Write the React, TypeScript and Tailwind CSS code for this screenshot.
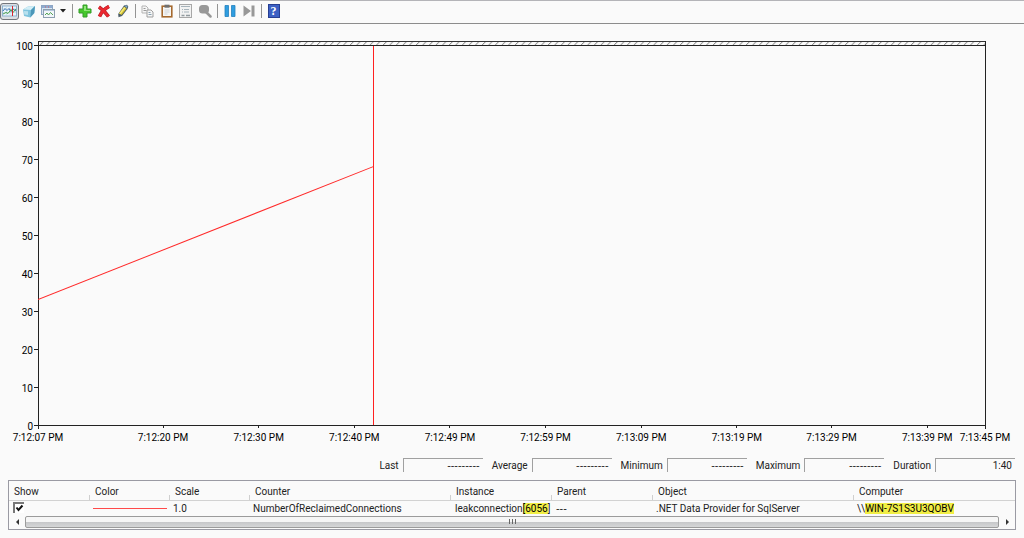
import type { ReactNode } from "react"

const samples = [33, 68]
const ySteps = [100, 90, 80, 70, 60, 50, 40, 30, 20, 10, 0]
const xSteps = [
    { at: 0, time: "7:12:07 PM" },
    { at: 13.2, time: "7:12:20 PM" },
    { at: 23.3, time: "7:12:30 PM" },
    { at: 33.4, time: "7:12:40 PM" },
    { at: 43.5, time: "7:12:49 PM" },
    { at: 53.6, time: "7:12:59 PM" },
    { at: 63.7, time: "7:13:09 PM" },
    { at: 73.8, time: "7:13:19 PM" },
    { at: 83.8, time: "7:13:29 PM" },
    { at: 93.9, time: "7:13:39 PM" },
    { at: 100, time: "7:13:45 PM" },
]
// how far the sweep has come, in percent of the plot width
const now = 35.4

const stats = [
    { name: "Last", value: "---------" },
    { name: "Average", value: "---------" },
    { name: "Minimum", value: "---------" },
    { name: "Maximum", value: "---------" },
    { name: "Duration", value: "1:40" },
]

const columns = [
    { name: "Show", width: "w-[81px]" },
    { name: "Color", width: "w-[80px]" },
    { name: "Scale", width: "w-[80px]" },
    { name: "Counter", width: "w-[201px]" },
    { name: "Instance", width: "w-[101px]" },
    { name: "Parent", width: "w-[101px]" },
    { name: "Object", width: "w-[201px]" },
    { name: "Computer", width: "" },
]

function Tool({ label, pressed, narrow, children }: { label: string, pressed?: boolean, narrow?: boolean, children: ReactNode }) {
    return (
        <button
            type="button"
            aria-label={label}
            className={`flex h-[17px] shrink-0 items-center justify-center ${narrow ? "w-3" : "w-[19px]"} ${pressed ? "rounded-[3px] border border-[#73767c] bg-[#dcdfe4]" : ""}`}
        >
            {children}
        </button>
    )
}

function Separator() {
    return (
        <div className="flex w-1.5 shrink-0 justify-center">
            <div className="h-[14px] w-px bg-[#949494]" />
        </div>
    )
}

function Toolbar() {
    return (
        <div className="flex h-6 items-center border-y border-t-[#b4b4b8] border-b-[#8c8c8c] pb-0.5">
            <Tool label="View current activity" pressed>
                <svg width="15" height="12" viewBox="0 0 15 12" fill="none">
                    <rect x=".5" y="1" width="14" height="10" fill="#eaf4fb" stroke="#8fb3cf" />
                    <path d="M1 4h13M1 7.500h13M4.500 1v10M8 1v10" stroke="#bcd5e6" strokeWidth=".6" />
                    <path d="M1 6l2-2.500 2 2 2-2 2 3 2-2.500 3 2" stroke="#3c74b8" />
                    <path d="M1 9l3-1.500 2 1 3-4 2 3 3-3.500" stroke="#4aa14a" />
                    <path d="M10.500 1v10" stroke="#d8262c" />
                </svg>
            </Tool>
            <Tool label="View log data">
                <svg width="14" height="13" viewBox="0 0 14 13">
                    <path d="M1 4.500l5-3 7-.5-.7 7-4 4.500L2 11z" fill="#7fc4de" />
                    <path d="M1 4.500l5-3 7-.5-4 4z" fill="#d3eef6" />
                    <path d="M9 5l4-4-.7 7-4 4.500z" fill="#4c97b9" />
                    <path d="M2 6l4 .3V10l-3.700-.5z" fill="#b8e1ef" />
                </svg>
            </Tool>
            <Tool label="Change graph type">
                <svg width="14" height="13" viewBox="0 0 14 13" fill="none">
                    <rect x=".5" y=".5" width="11" height="9" fill="#d9e6f3" stroke="#8ea6c4" />
                    <path d="M1 2h10" stroke="#8fabd0" strokeWidth="2" />
                    <path d="M4 2h1M7 2h1" stroke="#d2636b" />
                    <rect x="2.500" y="4.500" width="11" height="8" fill="#f2f6fa" stroke="#8d9fb0" />
                    <path d="M3 5.500h10" stroke="#b5c8dc" />
                    <path d="M4 10l2-2 1.500 2 2-2.500 2.500 2.500" stroke="#53a355" />
                </svg>
            </Tool>
            <Tool label="Graph type menu" narrow>
                <svg width="6" height="4" viewBox="0 0 6 4"><path d="M0 0h6L3 3.500z" fill="#222" /></svg>
            </Tool>
            <Separator />
            <Tool label="Add">
                <svg width="14" height="14" viewBox="0 0 14 14">
                    <path d="M5 1h4v4h4v4H9v4H5V9H1V5h4z" fill="#46c82c" stroke="#329a28" strokeLinejoin="round" />
                    <path d="M6 2h2v4h4v1H6z" fill="#90e57a" />
                </svg>
            </Tool>
            <Tool label="Delete">
                <svg width="14" height="13" viewBox="0 0 14 13" fill="none">
                    <path d="M2 2c3 2 7 6 9.500 9.500M12 1.500C8 3.500 4 8 2.500 11.500" stroke="#a91820" strokeWidth="3.600" />
                    <path d="M2 2c3 2 7 6 9.500 9.500M12 1.500C8 3.500 4 8 2.500 11.500" stroke="#ea2830" strokeWidth="2.600" />
                </svg>
            </Tool>
            <Tool label="Highlight">
                <svg width="12" height="14" viewBox="0 0 12 14">
                    <path d="M7 1.500L10 .7l1.300 2L10.500 5 5 12l-3.500 1.300L1.200 10z" fill="#4a5c68" />
                    <path d="M7 2.800l2.700 1.700L4.600 11 2 9.300z" fill="#d3bf2b" />
                    <path d="M7.300 3L8.600 3.900 3.500 10.300 2.200 9.400z" fill="#f3ea76" />
                    <path d="M7.500 1.800l2-.5 1 1.500-.7 1.300z" fill="#81aac7" />
                </svg>
            </Tool>
            <Separator />
            <Tool label="Copy properties">
                <svg width="13" height="13" viewBox="0 0 13 13" fill="none">
                    <path d="M1 1h4l2 2v5H1z" fill="#f6f6f6" stroke="#b4b4b4" />
                    <path d="M2.500 3.500h2M2.500 5.500h3" stroke="#999" />
                    <path d="M6 5h4l2 2v5H6z" fill="#f6f6f6" stroke="#9e9e9e" />
                    <path d="M7.500 7.500h2M7.500 9.500h3" stroke="#88a0b0" />
                </svg>
            </Tool>
            <Tool label="Paste counter list">
                <svg width="12" height="14" viewBox="0 0 12 14" fill="none">
                    <rect x="1.200" y="2.200" width="9.600" height="10.600" fill="#f6f6f4" stroke="#a5692f" strokeWidth="1.600" />
                    <rect x="3.500" y=".7" width="5" height="3" fill="#6f6f6f" />
                    <path d="M3.500 6h5M3.500 8h5M3.500 10h3" stroke="#c5cad0" strokeWidth=".8" />
                </svg>
            </Tool>
            <Tool label="Properties">
                <svg width="13" height="14" viewBox="0 0 13 14" fill="none">
                    <rect x=".5" y=".5" width="12" height="13" fill="#f2f2f2" stroke="#a8a8a8" />
                    <path d="M2 2.500h9M3 5.500h1M5 5.500h5M3 8h1M5 8h5" stroke="#a6b3bb" />
                    <path d="M2.500 11.500h3M7 11.500h4" stroke="#929ba0" strokeWidth="1.500" />
                </svg>
            </Tool>
            <Tool label="Zoom">
                <svg width="14" height="14" viewBox="0 0 14 14">
                    <rect x="1" y="1" width="10" height="8.500" rx="3.500" fill="#989898" />
                    <path d="M8.500 8.500l4 4" stroke="#989898" strokeWidth="2.500" strokeLinecap="round" />
                </svg>
            </Tool>
            <Separator />
            <Tool label="Freeze display">
                <svg width="12" height="12" viewBox="0 0 12 12">
                    <path d="M1 .5h3.500v11H1zM7.500 .5H11v11H7.500z" fill="#2f9de0" stroke="#2380bd" strokeWidth=".8" />
                </svg>
            </Tool>
            <Tool label="Update data">
                <svg width="12" height="12" viewBox="0 0 12 12">
                    <path d="M.5 .5L8 6l-7.500 5.500zM8.500 .5h3v11h-3z" fill="#989898" />
                </svg>
            </Tool>
            <Separator />
            <Tool label="Help">
                <span className="flex h-[14px] w-3 items-center justify-center border border-[#273f93] bg-[#3c60c4] font-['Liberation_Serif',serif] text-[12px] leading-none font-bold text-white">?</span>
            </Tool>
        </div>
    )
}

function Graph() {
    return (
        <div className="mt-[17px] pr-[39px] pl-[38px]">
            <svg className="block h-[384px] w-full overflow-visible" shapeRendering="crispEdges">
                <defs>
                    <pattern id="hatch" width="6.600" height="4" patternUnits="userSpaceOnUse">
                        <path d="M2 4l4-4" stroke="#555" strokeWidth=".8" shapeRendering="auto" />
                    </pattern>
                </defs>
                <rect width="100%" height="4" fill="url(#hatch)" />
                <line x1="0" x2="100%" y1=".5" y2=".5" stroke="#333" />
                <svg y="4" width="100%" height="380" overflow="visible">
                    <rect x=".5" y=".5" width="100%" height="380" fill="none" stroke="#222" />
                    <line x1=".5" x2=".5" y1="-4" y2="384" stroke="#222" />
                    {ySteps.map((value) => (
                        <g key={value}>
                            <line x1="-4" x2="0" y1={(100 - value) * 3.8 + 0.5} y2={(100 - value) * 3.8 + 0.5} stroke="#222" />
                            <text x="-5" y={(100 - value) * 3.8 + 5} textAnchor="end">{value}</text>
                        </g>
                    ))}
                    <svg x="0" y="380" width="100%" height="20" overflow="visible">
                        {xSteps.map(({ at, time }) => (
                            <g key={time}>
                                <line x1={`${at}%`} x2={`${at}%`} y1="0" y2="3" stroke="#222" />
                                <text x={`${at}%`} y="16" textAnchor="middle">{time}</text>
                            </g>
                        ))}
                    </svg>
                    <svg width="100%" height="380" viewBox="0 0 100 100" preserveAspectRatio="none">
                        <path d={`M0 ${100 - samples[0]}L${now} ${100 - samples[1]}`} stroke="#ff2a2a" vectorEffect="non-scaling-stroke" shapeRendering="auto" />
                    </svg>
                    <line x1={`${now}%`} x2={`${now}%`} y1="1" y2="380" stroke="#ff2020" />
                </svg>
                <line x1="100%" x2="100%" y1="0" y2="388" stroke="#222" />
            </svg>
        </div>
    )
}

function Stats() {
    return (
        <dl className="mt-[33px] flex justify-end gap-[9px] pr-[9px]">
            {stats.map(({ name, value }) => (
                <div key={name} className="flex h-[14px] gap-1 leading-4">
                    <dt>{name}</dt>
                    <dd className={`w-20 border-t border-l border-[#a0a0a0] pr-[3px] text-right leading-[14px] ${value.startsWith("-") ? "font-['DejaVu_Sans',sans-serif]" : ""}`}>{value}</dd>
                </div>
            ))}
        </dl>
    )
}

function CounterList() {
    return (
        <div className="mx-2 mt-2 border border-[#9a9aa3]">
            <table className="w-full table-fixed border-separate border-spacing-0 text-left whitespace-nowrap">
                <thead>
                    <tr>
                        {columns.map(({ name, width }, i) => (
                            <th key={name} className={`border-b border-[#d2d2d2] p-0 font-normal ${width}`}>
                                <div className="flex h-[19px] items-end justify-between">
                                    <span className="pl-[5px] leading-[17px]">{name}</span>
                                    {i < columns.length - 1 && <span className="h-[5px] w-px bg-[#cfcfcf]" />}
                                </div>
                            </th>
                        ))}
                    </tr>
                </thead>
                <tbody>
                    <tr className="h-[15px] leading-[15px]">
                        <td className="p-0 pt-px pl-1 align-top">
                            <span className="relative block h-[11px] w-[11px]">
                                <input
                                    type="checkbox"
                                    aria-label="Show"
                                    defaultChecked
                                    className="peer block h-[11px] w-[11px] appearance-none border-t-2 border-l-2 border-[#777] bg-white"
                                />
                                <svg className="pointer-events-none absolute right-0 bottom-0 hidden peer-checked:block" width="9" height="9" viewBox="0 0 9 9" fill="none">
                                    <path d="M1.500 3.500l2 2.500L7.500 1.500" stroke="#111" strokeWidth="2" />
                                </svg>
                            </span>
                        </td>
                        <td className="p-0 pl-[3px]"><div className="h-px w-[74px] bg-[#ff4a4a]" /></td>
                        <td className="p-0 pl-[3px]">1.0</td>
                        <td className="p-0 pl-[3px]">NumberOfReclaimedConnections</td>
                        <td className="p-0 pl-1">leakconnection<mark className="bg-[#f1ee45]">[6056</mark>]</td>
                        <td className="p-0 pl-1 font-['DejaVu_Sans',sans-serif]">---</td>
                        <td className="p-0 pl-[3px]">.NET Data Provider for SqlServer</td>
                        <td className="p-0 pl-[3px]">\\<mark className="bg-[#f1ee45]">WIN-7S1S3U3QOBV</mark></td>
                    </tr>
                </tbody>
            </table>
            <div className="mb-px flex h-3 items-stretch">
                <button type="button" aria-label="Scroll left" className="flex w-4 items-center justify-center">
                    <svg width="3" height="6" viewBox="0 0 3 6"><path d="M3 0v6L0 3z" fill="#333" /></svg>
                </button>
                <div className="flex flex-1 items-center justify-center rounded-[2px] border border-[#9b9b9b] bg-linear-to-b from-[#f6f6f6] from-45% via-[#c6c7c9] via-50% to-[#d6d7d8]">
                    <svg width="7" height="6" viewBox="0 0 7 6"><path d="M.5 0v5M3.500 0v5M6.500 0v5" stroke="#666" /></svg>
                </div>
                <button type="button" aria-label="Scroll right" className="flex w-4 items-center justify-center">
                    <svg width="3" height="6" viewBox="0 0 3 6"><path d="M0 0v6l3-3z" fill="#333" /></svg>
                </button>
            </div>
        </div>
    )
}

function App() {
    return (
        <main className="min-h-screen bg-[#fafafa] font-['Roboto',sans-serif] text-[10px] text-[#222]">
            <Toolbar />
            <Graph />
            <Stats />
            <CounterList />
        </main>
    )
}

export default App
